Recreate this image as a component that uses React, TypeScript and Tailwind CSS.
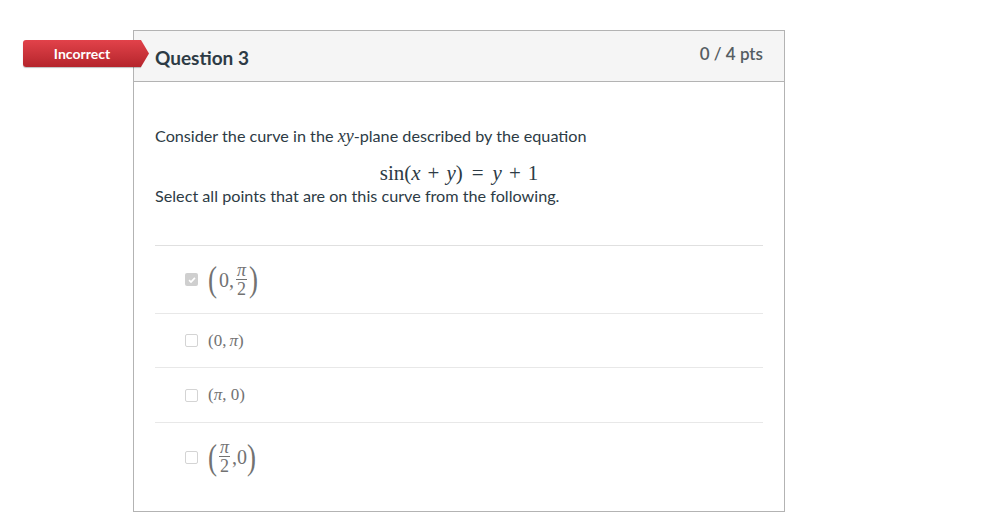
import type { ReactNode } from "react"

const serif = { fontFamily: '"Liberation Serif", "DejaVu Serif", serif' }

function Frac({ top, bottom }: { top: ReactNode; bottom: ReactNode }) {
  return (
    <span className="mx-[2px] inline-flex flex-col items-center align-middle text-[18px] leading-[15px]">
      <span className="px-[1px] pb-[1px] italic">{top}</span>
      <span className="w-full border-t border-current" />
      <span className="px-[1px] pt-[2px]">{bottom}</span>
    </span>
  )
}

function BigParen({ children }: { children: ReactNode }) {
  return <span className="inline-block scale-y-[1.3] text-[27px] leading-none">{children}</span>
}

function Checkbox({ checked }: { checked?: boolean }) {
  return checked ? (
    <span className="flex h-[13px] w-[13px] items-center justify-center rounded-[2px] bg-[#cfcfcf]">
      <svg viewBox="0 0 12 12" className="h-[10px] w-[10px]" fill="none" stroke="white" strokeWidth="2">
        <path d="M2.5 6.2l2.3 2.3 4.7-5" />
      </svg>
    </span>
  ) : (
    <span className="h-[13px] w-[13px] rounded-[2px] border border-[#d4d4d4] bg-white" />
  )
}

function Option({ checked, height, last, children }: { checked?: boolean; height: string; last?: boolean; children: ReactNode }) {
  return (
    <div className={`flex items-center gap-[10px] pl-[30px] ${last ? "" : "border-b border-[#e8e8e8]"} ${height}`}>
      <Checkbox checked={checked} />
      <span className="flex items-center text-[17px] text-[#727272]" style={serif}>
        {children}
      </span>
    </div>
  )
}

export default function App() {
  return (
    <div className="min-h-[532px] bg-white pt-[30px] pl-[133px]" style={{ fontFamily: 'Lato, "Open Sans", sans-serif' }}>
      <div className="relative w-[652px] border border-[#b3b3b3]">
        <div className="absolute left-[-111px] top-[9px] flex h-[27px] items-center">
          <div className="flex h-[27px] w-[118px] items-center justify-center rounded-l-[3px] bg-gradient-to-b from-[#e2424a] to-[#b5252c] text-[14px] font-bold text-white shadow-[0_1px_1px_rgba(0,0,0,0.25)]">
            Incorrect
          </div>
          <div className="h-[27px] w-[8px] bg-gradient-to-b from-[#e2424a] to-[#b5252c] [clip-path:polygon(0_0,100%_50%,0_100%)]" />
        </div>

        <div className="flex h-[51px] items-start justify-between border-b border-[#b3b3b3] bg-[#f5f5f5] pl-[21px] pr-[21px]">
          <h2 className="pt-[14px] text-[19px] font-bold leading-[25px] text-[#2d3b45]">Question 3</h2>
          <span className="pt-[12px] text-[17px] font-semibold leading-[22px] text-[#555d63]">0 / 4 pts</span>
        </div>

        <div className="px-[21px] pt-[43px] pb-[20px] text-[#2d3b45]">
          <p className="text-[16.2px] leading-[21px]">
            Consider the curve in the <span className="text-[18px] italic" style={serif}>xy</span>-plane described by the equation
          </p>
          <p className="mt-[14px] text-center text-[21px] leading-[24px]" style={serif}>
            sin(<i>x</i>
            <span className="mx-[7px]">+</span>
            <i>y</i>)<span className="mx-[9px]">=</span>
            <i>y</i>
            <span className="mx-[7px]">+</span>1
          </p>
          <p className="text-[16.2px] leading-[21px]">Select all points that are on this curve from the following.</p>

          <div className="mt-[39px] border-t border-[#e0e0e0]">
            <Option checked height="h-[68px]">
              <BigParen>(</BigParen>
              <span className="ml-[2px] text-[20px]">0,</span>
              <Frac top="π" bottom="2" />
              <BigParen>)</BigParen>
            </Option>
            <Option height="h-[54px]">
              (0, <i className="ml-[3px]">π</i>)
            </Option>
            <Option height="h-[55px]">
              (<i>π</i>, 0)
            </Option>
            <Option last height="h-[68px]">
              <BigParen>(</BigParen>
              <Frac top="π" bottom="2" />
              <span className="text-[20px]">,0</span>
              <BigParen>)</BigParen>
            </Option>
          </div>
        </div>
      </div>
    </div>
  )
}
